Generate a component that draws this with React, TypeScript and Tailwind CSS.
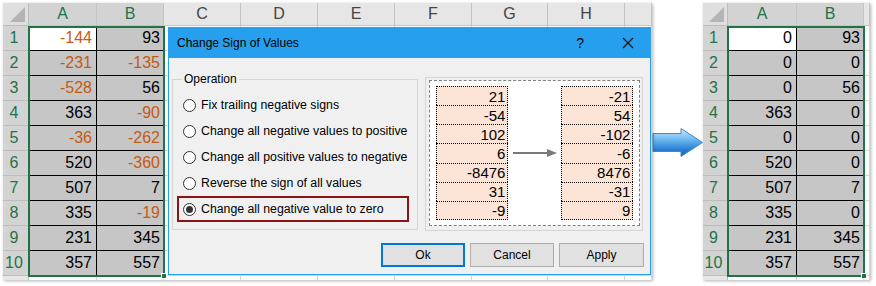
import React from "react"

type Col = { label: string; w: number; sel?: boolean }

const NEG = "text-[#c55a11]"

const leftCols: Col[] = [
  { label: "A", w: 68, sel: true },
  { label: "B", w: 67, sel: true },
  { label: "C", w: 77 },
  { label: "D", w: 77 },
  { label: "E", w: 77 },
  { label: "F", w: 77 },
  { label: "G", w: 76 },
  { label: "H", w: 77 },
  { label: "", w: 27 },
]

const rightCols: Col[] = [
  { label: "A", w: 69, sel: true },
  { label: "B", w: 67, sel: true },
  { label: "", w: 6 },
]

const before: [number, number][] = [
  [-144, 93],
  [-231, -135],
  [-528, 56],
  [363, -90],
  [-36, -262],
  [520, -360],
  [507, 7],
  [335, -19],
  [231, 345],
  [357, 557],
]

const after: [number, number][] = [
  [0, 93],
  [0, 0],
  [0, 56],
  [363, 0],
  [0, 0],
  [520, 0],
  [507, 7],
  [335, 0],
  [231, 345],
  [357, 557],
]

function Sheet({
  cols,
  rows,
  rhw,
  width,
  children,
}: {
  cols: Col[]
  rows: [number, number][]
  rhw: number
  width: number
  children?: React.ReactNode
}) {
  const selW = cols[0].w + cols[1].w
  return (
    <div
      className="relative h-[277px] overflow-hidden bg-white shadow-[1px_1px_3px_rgba(0,0,0,0.3)] font-['Liberation_Sans',Arial,sans-serif] text-[16px]"
      style={{ width }}
    >
      {/* column headers */}
      <div className="flex h-[23px]">
        <div
          className="relative shrink-0 border-r border-b border-[#bcbcbc] bg-[#dfdfdf]"
          style={{ width: rhw }}
        >
          <svg className="absolute right-[3px] bottom-[3px]" width="15" height="15">
            <polygon points="15,0 15,15 0,15" fill="#b4b4b4" />
          </svg>
        </div>
        {cols.map((c, i) => (
          <div
            key={i}
            className={`flex shrink-0 items-center justify-center border-r border-b border-[#c4c4c4] leading-none ${
              c.sel ? "bg-[#d3d3d3] text-[#217346]" : "bg-[#e6e6e6] text-[#444]"
            }`}
            style={{ width: c.w }}
          >
            {c.label}
          </div>
        ))}
      </div>

      {rows.map((r, ri) => (
        <div key={ri} className="flex h-[25px]">
          <div
            className="flex shrink-0 items-center justify-center border-r border-b border-[#bcbcbc] bg-[#d3d3d3] pr-[3px] text-[#217346]"
            style={{ width: rhw }}
          >
            {ri + 1}
          </div>
          {cols.map((c, ci) => {
            if (ci < 2) {
              const v = r[ci]
              const active = ri === 0 && ci === 0
              return (
                <div
                  key={ci}
                  className={`flex shrink-0 items-center justify-end border-b border-black pr-[4px] ${
                    ci === 0 ? "border-r" : ""
                  } ${active ? "bg-white" : "bg-[#c6c6c6]"} ${v < 0 ? NEG : "text-black"}`}
                  style={{ width: c.w }}
                >
                  {v}
                </div>
              )
            }
            return (
              <div
                key={ci}
                className="shrink-0 border-r border-b border-[#d4d4d4] bg-white"
                style={{ width: c.w }}
              />
            )
          })}
        </div>
      ))}

      <div className="flex h-[4px]">
        <div className="shrink-0 border-r border-[#bcbcbc] bg-[#e6e6e6]" style={{ width: rhw }} />
        {cols.map((c, i) => (
          <div key={i} className="shrink-0 border-r border-[#d4d4d4]" style={{ width: c.w }} />
        ))}
      </div>

      {/* selection frame */}
      <div
        className="pointer-events-none absolute top-[23px] h-[251px] border-2 border-[#217346]"
        style={{ left: rhw - 1, width: selW + 2 }}
      />
      <div
        className="absolute top-[270px] h-[6px] w-[6px] border border-white bg-[#217346]"
        style={{ left: rhw + selW - 3 }}
      />
      {children}
    </div>
  )
}

const options = [
  "Fix trailing negative signs",
  "Change all negative values to positive",
  "Change all positive values to negative",
  "Reverse the sign of all values",
  "Change all negative value to zero",
]

const sample: [string, string][] = [
  ["21", "-21"],
  ["-54", "54"],
  ["102", "-102"],
  ["6", "-6"],
  ["-8476", "8476"],
  ["31", "-31"],
  ["-9", "9"],
]

function Radio({ on }: { on?: boolean }) {
  return (
    <span className="flex h-[13px] w-[13px] shrink-0 items-center justify-center rounded-full border border-[#333] bg-white">
      {on && <span className="h-[7px] w-[7px] rounded-full bg-[#333]" />}
    </span>
  )
}

function Dialog() {
  return (
    <div className="absolute left-[165px] top-[24px] flex h-[248px] w-[483px] flex-col border border-[#26a0ee] bg-[#f0f0f0] font-['Liberation_Sans',Arial,sans-serif] text-[12px] text-black">
      <div className="flex h-[30px] shrink-0 items-center bg-[#26a0ee] pl-[8px]">
        <span className="text-[12px]">Change Sign of Values</span>
        <span className="ml-auto mr-[38px] text-[14px]">?</span>
        <svg className="mr-[16px]" width="12" height="12" viewBox="0 0 12 12">
          <path d="M1 1 L11 11 M11 1 L1 11" stroke="#111" strokeWidth="1.2" />
        </svg>
      </div>

      <div className="flex items-start gap-[7px] pl-[3px] pt-[13px]">
        <fieldset className="h-[159px] w-[246px] border border-[#d5d5d5] pl-[4px] pr-[8px]">
          <legend className="ml-[5px] px-[2px] leading-[16px]">Operation</legend>
          <div className="mt-[5px] flex flex-col">
            {options.map((o, i) => {
              const on = i === options.length - 1
              return (
                <div
                  key={o}
                  className={`flex h-[26px] items-center gap-[5px] border-2 pl-[4px] ${
                    on ? "border-[#8b1414]" : "border-transparent"
                  }`}
                >
                  <Radio on={on} />
                  <span className="whitespace-nowrap text-[12.3px]">{o}</span>
                </div>
              )
            })}
          </div>
        </fieldset>

        <div className="mt-[6px] h-[154px] w-[218px] border border-[#d5d5d5] pb-[4px] pl-[3px] pr-[2px] pt-[2px]">
          <div className="flex h-full items-start border border-dashed border-[#808080] bg-white pl-[6px] pt-[5px] text-[15px] leading-none">
            <div className="flex w-[72px] flex-col">
              {sample.map(([a], i) => (
                <div
                  key={i}
                  className="flex h-[19.15px] items-center justify-end border-x border-t border-dotted border-black bg-[#fce4d6] pr-[2px] last:border-b"
                >
                  {a}
                </div>
              ))}
            </div>
            <div className="flex h-[134px] w-[53px] items-center justify-center">
              <svg width="44" height="10" viewBox="0 0 44 10">
                <path d="M0 5 H36" stroke="#7a7a7a" strokeWidth="2" />
                <polygon points="34,1 44,5 34,9" fill="#7a7a7a" />
              </svg>
            </div>
            <div className="flex w-[72px] flex-col">
              {sample.map(([, b], i) => (
                <div
                  key={i}
                  className="flex h-[19.15px] items-center justify-end border-x border-t border-dotted border-black bg-[#fce4d6] pr-[2px] last:border-b"
                >
                  {b}
                </div>
              ))}
            </div>
          </div>
        </div>
      </div>

      <div className="mt-auto mb-[7px] flex justify-end gap-[5px] pr-[6px]">
        <button className="h-[24px] w-[84px] border-2 border-[#0078d7] bg-[#e1e1e1]">Ok</button>
        <button className="h-[24px] w-[84px] border border-[#adadad] bg-[#e1e1e1]">Cancel</button>
        <button className="h-[24px] w-[85px] border border-[#adadad] bg-[#e1e1e1]">Apply</button>
      </div>
    </div>
  )
}

function BlueArrow() {
  return (
    <svg width="51" height="30" viewBox="0 0 51 30">
      <defs>
        <linearGradient id="ab" x1="0" y1="0" x2="0" y2="1">
          <stop offset="0" stopColor="#cfe9fc" />
          <stop offset="0.4" stopColor="#6ab8f0" />
          <stop offset="0.75" stopColor="#2a7fd4" />
          <stop offset="1" stopColor="#1a5fae" />
        </linearGradient>
      </defs>
      <polygon
        points="1,5.5 29,5.5 29,0.5 50.5,14.5 29,28.5 29,23.5 1,23.5"
        fill="url(#ab)"
        stroke="#3f87cf"
        strokeWidth="1"
      />
    </svg>
  )
}

export default function App() {
  return (
    <div className="flex h-[286px] w-[876px] items-start bg-white pl-[3px] pt-[3px]">
      <Sheet cols={leftCols} rows={before} rhw={26} width={649}>
        <Dialog />
      </Sheet>
      <div className="mt-[125px] shrink-0">
        <BlueArrow />
      </div>
      <Sheet cols={rightCols} rows={after} rhw={25} width={167} />
    </div>
  )
}
